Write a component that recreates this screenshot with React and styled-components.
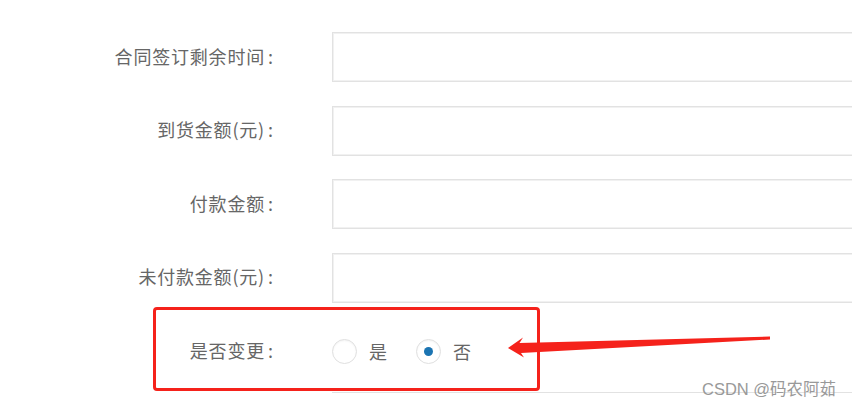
import React from "react";
import styled, { createGlobalStyle } from "styled-components";

const GlobalStyle = createGlobalStyle`
    html, body {
        margin: 0;
        padding: 0;
        background: #fff;
        overflow: hidden;
    }
    body {
        font-family: "Noto Sans CJK SC", "Noto Sans", sans-serif;
    }
`

const Page = styled.div`
    position: relative;
    width: 852px;
    height: 405px;
    overflow: hidden;
`

const Form = styled.div`
    width: 900px;
    padding-top: 32px;
    display: grid;
    grid-template-columns: 273px 1fr;
    column-gap: 59px;
    row-gap: 23.5px;
`

const Label = styled.div`
    justify-self: end;
    align-self: center;
    font-size: 18px;
    letter-spacing: 0.8px;
    color: #666;
    white-space: nowrap;
    margin-top: -3px;
`

const Colon = styled.span`
    margin-left: 3px;
    letter-spacing: 0;
`

const Input = styled.div`
    height: 50px;
    box-sizing: border-box;
    border: 1px solid #e2e2e2;
    box-shadow: inset 0 0 0 1px #f1f1f1;
    background: #fff;
`

const Divider = styled.div`
    height: 20px;
    margin-top: -8px;
    border-top: 1px solid #e2e2e2;
`

const RadioGroup = styled.div`
    height: 50px;
    display: flex;
    align-items: center;
`

const RadioItem = styled.label`
    display: flex;
    align-items: center;
    margin-right: 29px;
    font-size: 18px;
    color: #666;
`

const RadioCircle = styled.span`
    width: 25px;
    height: 25px;
    box-sizing: border-box;
    border-radius: 50%;
    border: 1.5px solid #e0e0e0;
    box-shadow: inset 0 1px 2px rgba(0, 0, 0, 0.05);
    display: flex;
    align-items: center;
    justify-content: center;
    margin-right: 12px;

    &::after {
        content: "";
        width: 9px;
        height: 9px;
        border-radius: 50%;
        background: ${props => props.checked ? "#1b74b2" : "transparent"};
    }
`

const Highlight = styled.div`
    position: absolute;
    left: 153px;
    top: 307px;
    width: 387px;
    height: 84px;
    box-sizing: border-box;
    border: 3px solid #f5221b;
    border-radius: 4px;
`

const Arrow = styled.svg`
    position: absolute;
    left: 0;
    top: 0;
    pointer-events: none;
`

const Watermark = styled.div`
    position: absolute;
    left: 702px;
    top: 376px;
    font-family: "Liberation Sans", "Noto Sans CJK SC", sans-serif;
    font-size: 16.5px;
    color: #999;
    white-space: nowrap;
`

const fields = [
    "合同签订剩余时间",
    "到货金额(元)",
    "付款金额",
    "未付款金额(元)",
];

const Radio = ({ text, checked }) => (
    <RadioItem>
        <RadioCircle checked={checked} />
        {text}
    </RadioItem>
)

export default function App() {
    return (
        <Page>
            <GlobalStyle />
            <Form>
                {fields.map(f => (
                    <React.Fragment key={f}>
                        <Label>{f}<Colon>:</Colon></Label>
                        <Input />
                    </React.Fragment>
                ))}
                <Label>是否变更<Colon>:</Colon></Label>
                <RadioGroup>
                    <Radio text="是" />
                    <Radio text="否" checked />
                </RadioGroup>
                <div />
                <Divider />
            </Form>
            <Highlight />
            <Arrow width="852" height="405" viewBox="0 0 852 405">
                <polygon
                    points="508,348 523,337.5 519.5,343 770,336.5 770,339.5 521,353 524,357.5"
                    fill="#f5221b"
                />
            </Arrow>
            <Watermark>CSDN @码农阿茹</Watermark>
        </Page>
    )
}
